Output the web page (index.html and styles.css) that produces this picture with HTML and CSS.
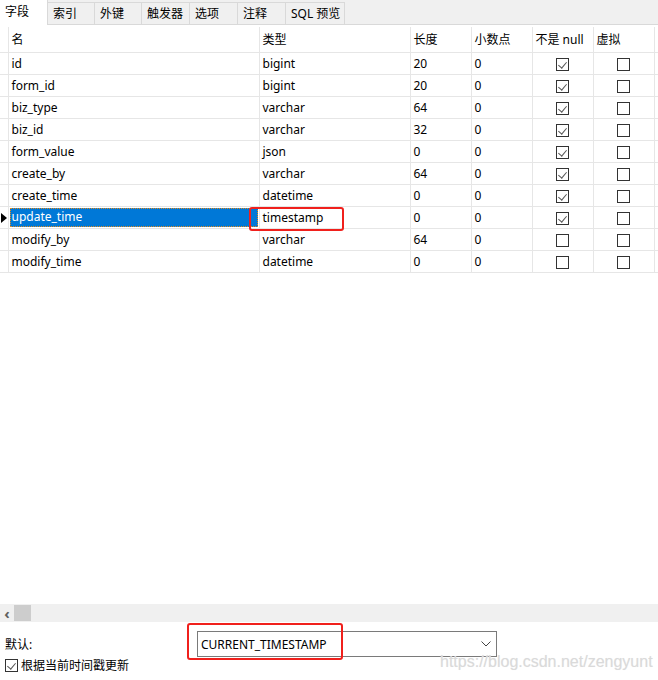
FILE: index.html
```html
<!DOCTYPE html>
<html lang="zh-CN">
<head>
  <meta charset="UTF-8">
  <title>表设计</title>
  <link rel="stylesheet" href="styles.css">
</head>
<body>
  <div class="tabs">
    <span class="tab active" style="width:48px">字段</span>
    <span class="tab" style="width:47px">索引</span>
    <span class="tab" style="width:47px">外键</span>
    <span class="tab" style="width:48px">触发器</span>
    <span class="tab" style="width:48px">选项</span>
    <span class="tab" style="width:48px">注释</span>
    <span class="tab" style="width:59px">SQL 预览</span>
  </div>

  <div class="grid-wrap">
    <table class="grid">
      <colgroup>
        <col style="width:8px">
        <col style="width:251px">
        <col style="width:151px">
        <col style="width:61px">
        <col style="width:61px">
        <col style="width:61px">
        <col style="width:61px">
        <col style="width:30px">
      </colgroup>
      <thead>
        <tr>
          <th class="marker"></th>
          <th>名</th>
          <th>类型</th>
          <th>长度</th>
          <th>小数点</th>
          <th>不是 null</th>
          <th>虚拟</th>
          <th class="extra"><span class="key-sliver"></span></th>
        </tr>
      </thead>
      <tbody id="rows"></tbody>
    </table>
  </div>

  <div class="hscroll">
    <span class="arrow">&lsaquo;</span>
    <span class="thumb"></span>
  </div>

  <div class="props">
    <div class="prop-row">
      <span class="prop-label">默认:</span>
      <div class="select-wrap">
        <div class="select">
          <span>CURRENT_TIMESTAMP</span>
          <svg class="chev" width="10" height="6" viewBox="0 0 10 6"><path d="M0.5 0.5 L5 5 L9.5 0.5" fill="none" stroke="#444" stroke-width="1"/></svg>
        </div>
        <div class="mark mark-default"></div>
      </div>
    </div>
    <label class="check-row">
      <span class="cb checked"></span>根据当前时间戳更新
    </label>
  </div>

  <div class="watermark">https://blog.csdn.net/zengyunt</div>

  <script>
    const fields = [
      ["id", "bigint", "20", "0", true],
      ["form_id", "bigint", "20", "0", true],
      ["biz_type", "varchar", "64", "0", true],
      ["biz_id", "varchar", "32", "0", true],
      ["form_value", "json", "0", "0", true],
      ["create_by", "varchar", "64", "0", true],
      ["create_time", "datetime", "0", "0", true],
      ["update_time", "timestamp", "0", "0", true],
      ["modify_by", "varchar", "64", "0", false],
      ["modify_time", "datetime", "0", "0", false]
    ];
    const tbody = document.getElementById("rows");
    fields.forEach(([name, type, len, dec, notNull]) => {
      const selected = name === "update_time";
      const tr = document.createElement("tr");
      tr.innerHTML =
        `<td class="marker">${selected ? '<span class="caret"></span>' : ''}</td>` +
        `<td class="${selected ? 'sel' : ''}"><span class="cell-text">${name}</span></td>` +
        `<td class="type">${type}${selected ? '<div class="mark mark-type"></div>' : ''}</td>` +
        `<td>${len}</td>` +
        `<td>${dec}</td>` +
        `<td class="center"><span class="cb${notNull ? ' checked' : ''}"></span></td>` +
        `<td class="center"><span class="cb"></span></td>` +
        `<td class="extra"></td>`;
      tbody.appendChild(tr);
    });
  </script>
</body>
</html>
```

FILE: styles.css
```css
/* General */
body, html {
  margin: 0;
  padding: 0;
  width: 658px;
  height: 680px;
  overflow: hidden;
  background: white;
  font-family: "Noto Sans", "Noto Sans CJK SC", sans-serif;
  font-size: 12px;
  color: black;
}
body {
  display: flex;
  flex-direction: column;
  position: relative;
}

/* Tabs */
.tabs {
  display: flex;
  height: 25px;
  background: #f0f0f0;
  border-bottom: 1px solid #d9d9d9;
  box-sizing: border-box;
  flex-shrink: 0;
}
.tab {
  box-sizing: border-box;
  margin-top: 2px;
  height: 22px;
  padding-left: 5px;
  line-height: 22px;
  border-right: 1px solid #d9d9d9;
  border-top: 1px solid #d9d9d9;
  background: #f0f0f0;
  white-space: nowrap;
}
.tab.active {
  margin-top: 0;
  height: 25px;
  line-height: 24px;
  background: white;
  border-top: none;
}

/* Field grid */
.grid-wrap {
  flex-grow: 1;
  overflow: hidden;
  padding-top: 2px;
}
.grid {
  border-collapse: collapse;
  table-layout: fixed;
  width: 684px;
}
.grid th, .grid td {
  height: 22px;
  padding: 0 0 0 3px;
  text-align: left;
  font-weight: normal;
  white-space: nowrap;
  border-right: 1px solid #e6e6e6;
  border-bottom: 1px solid #e6e6e6;
  box-sizing: border-box;
  overflow: hidden;
}
.grid th {
  height: 25px;
}
.grid .marker {
  padding: 0;
  position: relative;
  overflow: visible;
}
.grid .center {
  text-align: center;
  padding: 0;
}
.grid .extra {
  border-right: none;
}
.key-sliver {
  display: inline-block;
  width: 2px;
  height: 9px;
  margin-top: 3px;
  background: #e8a040;
  vertical-align: middle;
}
.grid td.sel {
  padding: 1px;
}
.sel .cell-text {
  display: block;
  height: 19px;
  line-height: 18px;
  padding-left: 2px;
  background: #0078d7;
  color: white;
  outline: 1px dotted #e08a1e;
  outline-offset: -1px;
}
.caret {
  position: absolute;
  left: 1px;
  top: 6px;
  width: 0;
  height: 0;
  border-top: 5px solid transparent;
  border-bottom: 5px solid transparent;
  border-left: 6px solid black;
}
.type {
  position: relative;
}
.grid td.type {
  overflow: visible;
}

/* Checkboxes */
.cb {
  display: inline-block;
  width: 13px;
  height: 13px;
  border: 1px solid #333;
  box-sizing: border-box;
  vertical-align: middle;
  position: relative;
  background: white;
}
.cb.checked::after {
  content: "";
  position: absolute;
  left: 3px;
  top: 1px;
  width: 4px;
  height: 7px;
  border-right: 1px solid #555;
  border-bottom: 1px solid #555;
  transform: rotate(40deg);
}

/* Red highlight marks */
.mark {
  position: absolute;
  border: 2px solid #f0201c;
  border-radius: 3px;
  box-sizing: border-box;
  pointer-events: none;
}
.mark-type {
  left: -11px;
  top: 0;
  width: 95px;
  height: 24px;
}
.mark-default {
  left: -10px;
  top: -8px;
  width: 156px;
  height: 37px;
}

/* Horizontal scrollbar */
.hscroll {
  height: 18px;
  background: #f0f0f0;
  display: flex;
  align-items: center;
  flex-shrink: 0;
  margin-bottom: 9px;
}
.arrow {
  width: 14px;
  text-align: center;
  font-size: 15px;
  line-height: 16px;
  color: #606060;
  font-weight: bold;
}
.thumb {
  width: 17px;
  height: 16px;
  background: #cdcdcd;
}

/* Property panel */
.props {
  flex-shrink: 0;
  height: 49px;
  padding-left: 5px;
}
.prop-row {
  display: flex;
  align-items: center;
  height: 26px;
}
.prop-label {
  width: 192px;
}
.select-wrap {
  position: relative;
}
.select {
  box-sizing: border-box;
  width: 300px;
  height: 26px;
  border: 1px solid #7a7a7a;
  display: flex;
  align-items: center;
  justify-content: space-between;
  padding: 0 5px 0 3px;
}
.check-row {
  display: flex;
  align-items: center;
  gap: 3px;
  height: 16px;
}

.watermark {
  position: absolute;
  left: 440px;
  top: 653px;
  font-family: "Liberation Sans", Arial, sans-serif;
  font-size: 16px;
  color: #dadada;
  text-shadow: 0 0 1px #eee;
}
```
